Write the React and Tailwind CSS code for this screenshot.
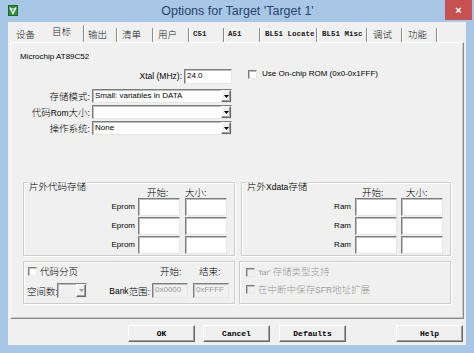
import React from 'react';

const sans = "font-['Liberation_Sans','Noto_Sans_CJK_SC',sans-serif]";
const cjk = "font-['Noto_Sans_CJK_SC','Liberation_Sans',sans-serif] font-light";
const mono = "font-['Liberation_Mono','DejaVu_Sans_Mono',monospace] font-bold";

const sunken = "border border-t-[#7d7d7d] border-l-[#7d7d7d] border-r-[#e6e6e6] border-b-[#e6e6e6] shadow-[inset_1px_1px_0_#bdbdbd]";
const raised = "border border-t-white border-l-white border-r-[#696969] border-b-[#696969] shadow-[inset_-1px_-1px_0_#a0a0a0]";
const group = "relative border border-[#cdcdcd] shadow-[inset_1px_1px_0_#ffffff,1px_1px_0_#ffffff]";

const tabs = [
  { label: '设备', w: 'w-[34px]', pl: 'pl-[6px]', font: cjk, sep: false },
  { label: '目标', w: 'w-[40px]', pl: 'pl-[8px]', font: cjk, active: true },
  { label: '输出', w: 'w-[33px]', pl: 'pl-[4px]', font: cjk },
  { label: '清单', w: 'w-[36px]', pl: 'pl-[5px]', font: cjk },
  { label: '用户', w: 'w-[36px]', pl: 'pl-[5px]', font: cjk },
  { label: 'C51', w: 'w-[35px]', pl: 'pl-[4px]', font: mono },
  { label: 'A51', w: 'w-[36px]', pl: 'pl-[4px]', font: mono },
  { label: 'BL51 Locate', w: 'w-[57px]', pl: 'pl-[5px]', font: mono },
  { label: 'BL51 Misc', w: 'w-[50px]', pl: 'pl-[5px]', font: mono },
  { label: '调试', w: 'w-[35px]', pl: 'pl-[6px]', font: cjk },
  { label: '功能', w: 'w-[35px]', pl: 'pl-[6px]', font: cjk },
];

function Arrow({ color }) {
  return (
    <svg width="5" height="3" viewBox="0 0 5 3">
      <path d="M0 0h5L2.5 3z" fill={color} />
    </svg>
  );
}

function Combo({ value, w, h, disabled }) {
  return (
    <div className={`${sunken} ${w} ${h} flex items-stretch ${disabled ? 'bg-[#f0f0f0]' : 'bg-white'}`}>
      <div className={`flex-1 ${sans} text-[8px] leading-[12px] pl-[2px] text-black`}>{value}</div>
      <div className={`w-[10px] bg-[#f0f0f0] ${raised} flex items-center justify-center`}>
        <Arrow color={disabled ? '#a0a0a0' : '#000'} />
      </div>
    </div>
  );
}

function Field({ value, w, h, disabled }) {
  return (
    <div className={`${sunken} ${w} ${h} ${disabled ? 'bg-[#f0f0f0] text-[#9a9a9a]' : 'bg-white text-black'} ${sans} text-[8px] leading-[12px] pl-[2px]`}>
      {value}
    </div>
  );
}

function Check({ disabled }) {
  return <div className={`w-[9px] h-[9px] shrink-0 ${sunken} ${disabled ? 'bg-[#f0f0f0]' : 'bg-white'}`} />;
}

function Button({ label, ml }) {
  return (
    <div className={`${ml} w-[67px] h-[17px] bg-[#f0f0f0] ${raised} flex items-center justify-center ${mono} text-[8px] text-black`}>
      {label}
    </div>
  );
}

export default function App() {
  return (
    <div className="w-[474px] h-[353px] bg-[#a8c6e6] flex flex-col overflow-hidden">
      {/* title bar */}
      <div className="h-[22px] flex items-start shrink-0">
        <svg className="ml-[8px] mt-[5px]" width="10" height="11" viewBox="0 0 10 11">
          <rect width="10" height="11" fill="#2f8f3a" />
          <rect x="0.5" y="0.5" width="9" height="10" fill="none" stroke="#1d6a27" />
          <path d="M2 2.5L5 8.5L8 2.5" stroke="#fff" strokeWidth="1.4" fill="none" />
          <path d="M3 4h4" stroke="#fff" strokeWidth="1" />
        </svg>
        <div className={`flex-1 text-center pl-[12px] pt-[2px] text-[12.5px] leading-[18px] text-[#27456a] ${sans}`}>
          Options for Target 'Target 1'
        </div>
        <div className={`w-[27px] h-[20px] mr-[2px] bg-[#c75050] flex items-center justify-center text-white text-[11px] font-bold ${sans}`}>
          ×
        </div>
      </div>

      {/* client area */}
      <div className="flex-1 mx-[8px] mb-[8px] bg-[#f0f0f0] flex flex-col">
        {/* tabs */}
        <div className="h-[20px] flex items-end pl-[2px] shrink-0">
          {tabs.map((t) => (
            <div
              key={t.label}
              className={`${t.w} ${t.pl} ${t.active ? 'h-[17px] pt-[0px]' : 'h-[14px]'} ${t.sep === false ? '' : 'border-r border-[#8a8a8a] shadow-[1px_0_0_#ffffff]'} flex items-start`}
            >
              <span className={`${t.font} ${t.font === cjk ? 'text-[9.5px]' : 'text-[7.5px]'} leading-[13px] text-[#1a1a1a] whitespace-nowrap`}>
                {t.label}
              </span>
            </div>
          ))}
        </div>

        {/* tab panel */}
        <div className="ml-[2px] w-[454px] h-[277px] border border-t-white border-l-white border-r-[#8a8a8a] border-b-[#8a8a8a] shadow-[inset_-1px_-1px_0_#c8c8c8] flex flex-col">
          <div className={`mt-[9px] ml-[9px] h-[10px] ${sans} text-[8px] leading-[10px] text-black`}>Microchip AT89C52</div>

          <div className="flex mt-[7px]">
            <div className="w-[221px] flex flex-col">
              <div className="h-[15px] flex items-center justify-end">
                <span className={`${sans} text-[8.5px] mr-[2px]`}>Xtal (MHz):</span>
                <Field value="24.0" w="w-[48px]" h="h-[15px]" />
              </div>
              <div className="mt-[5px] h-[14px] flex items-center justify-end">
                <span className={`${cjk} text-[9.5px] mr-[2px]`}>存储模式:</span>
                <Combo value="Small: variables in DATA" w="w-[140px]" h="h-[14px]" />
              </div>
              <div className="mt-[2px] h-[14px] flex items-center justify-end">
                <span className={`${cjk} text-[9.5px] mr-[2px]`}>
                  代码<span className={`${sans} text-[8.5px]`}>Rom</span>大小:
                </span>
                <Combo value="" w="w-[140px]" h="h-[14px]" />
              </div>
              <div className="mt-[2px] h-[14px] flex items-center justify-end">
                <span className={`${cjk} text-[9.5px] mr-[2px]`}>操作系统:</span>
                <Combo value="None" w="w-[140px]" h="h-[14px]" />
              </div>
            </div>
            <div className="ml-[16px] h-[10px] flex items-center">
              <Check />
              <span className={`ml-[5px] ${sans} text-[8px] text-black`}>Use On-chip ROM (0x0-0x1FFF)</span>
            </div>
          </div>

          {/* off-chip memory groups */}
          <div className="flex mt-[47px]">
            <div className={`${group} ml-[12px] w-[212px] h-[74px] flex flex-col`}>
              <div className={`absolute left-[4px] top-[-3px] px-[1px] bg-[#f0f0f0] ${cjk} text-[9.5px] leading-[12px]`}>片外代码存储</div>
              <div className="mt-[3px] h-[12px] flex justify-end pr-[7px] gap-[5px]">
                <div className={`w-[42px] pl-[9px] ${cjk} text-[9.5px] leading-[12px]`}>开始:</div>
                <div className={`w-[42px] pl-[0px] ${cjk} text-[9.5px] leading-[12px]`}>大小:</div>
              </div>
              {[0, 1, 2].map((i) => (
                <div key={i} className={`${i ? 'mt-[1px]' : ''} h-[18px] flex items-center justify-end pr-[7px]`}>
                  <span className={`${sans} text-[8px] mr-[3px]`}>Eprom</span>
                  <Field value="" w="w-[42px]" h="h-[18px]" />
                  <div className="ml-[5px]">
                    <Field value="" w="w-[42px]" h="h-[18px]" />
                  </div>
                </div>
              ))}
            </div>

            <div className={`${group} ml-[6px] w-[210px] h-[74px] flex flex-col`}>
              <div className={`absolute left-[4px] top-[-3px] px-[1px] bg-[#f0f0f0] ${cjk} text-[9.5px] leading-[12px]`}>
                片外<span className={`${sans} text-[8.5px]`}>Xdata</span>存储
              </div>
              <div className="mt-[3px] h-[12px] flex justify-end pr-[7px] gap-[4px]">
                <div className={`w-[42px] pl-[7px] ${cjk} text-[9.5px] leading-[12px]`}>开始:</div>
                <div className={`w-[42px] pl-[5px] ${cjk} text-[9.5px] leading-[12px]`}>大小:</div>
              </div>
              {[0, 1, 2].map((i) => (
                <div key={i} className={`${i ? 'mt-[1px]' : ''} h-[18px] flex items-center justify-end pr-[7px]`}>
                  <span className={`${sans} text-[8px] mr-[4px]`}>Ram</span>
                  <Field value="" w="w-[42px]" h="h-[18px]" />
                  <div className="ml-[4px]">
                    <Field value="" w="w-[42px]" h="h-[18px]" />
                  </div>
                </div>
              ))}
            </div>
          </div>

          {/* banking / misc groups */}
          <div className="flex mt-[5px]">
            <div className={`${group} ml-[12px] w-[212px] h-[43px] flex flex-col`}>
              <div className="mt-[3px] h-[12px] flex items-center">
                <div className="w-[128px] flex items-center pl-[4px]">
                  <Check />
                  <span className={`ml-[3px] ${cjk} text-[9.5px] leading-[12px]`}>代码分页</span>
                </div>
                <div className={`w-[36px] pl-[8px] ${cjk} text-[9.5px] leading-[12px]`}>开始:</div>
                <div className={`ml-[5px] w-[36px] pl-[6px] ${cjk} text-[9.5px] leading-[12px]`}>结束:</div>
              </div>
              <div className="mt-[6px] h-[15px] flex items-center">
                <div className={`w-[33px] pl-[3px] ${cjk} text-[9.5px] leading-[12px] whitespace-nowrap`}>空间数:</div>
                <Combo value="" w="w-[30px]" h="h-[15px]" disabled />
                <div className={`w-[65px] flex justify-end pr-[2px] ${cjk} text-[9.5px] leading-[12px] whitespace-nowrap`}>
                  <span className={`${sans} text-[8.5px]`}>Bank</span>范围:
                </div>
                <Field value="0x0000" w="w-[36px]" h="h-[15px]" disabled />
                <div className="ml-[5px]">
                  <Field value="0xFFFF" w="w-[36px]" h="h-[15px]" disabled />
                </div>
              </div>
            </div>

            <div className={`${group} ml-[4px] w-[212px] h-[43px] flex flex-col`}>
              <div className="mt-[4px] h-[12px] flex items-center pl-[6px]">
                <Check disabled />
                <span className={`ml-[3px] ${cjk} text-[9.5px] leading-[12px] text-[#9a9a9a]`}>
                  <span className={`${sans} text-[8px]`}>'far'</span> 存储类型支持
                </span>
              </div>
              <div className="mt-[5px] h-[12px] flex items-center pl-[6px]">
                <Check disabled />
                <span className={`ml-[3px] ${cjk} text-[9.5px] leading-[12px] text-[#9a9a9a]`}>
                  在中断中保存<span className={`${sans} text-[8.5px]`}>SFR</span>地址扩展
                </span>
              </div>
            </div>
          </div>
        </div>

        {/* buttons */}
        <div className="flex mt-[6px] h-[17px]">
          <Button label="OK" ml="ml-[120px]" />
          <Button label="Cancel" ml="ml-[8px]" />
          <Button label="Defaults" ml="ml-[9px]" />
          <Button label="Help" ml="ml-[50px]" />
        </div>
      </div>
    </div>
  );
}
